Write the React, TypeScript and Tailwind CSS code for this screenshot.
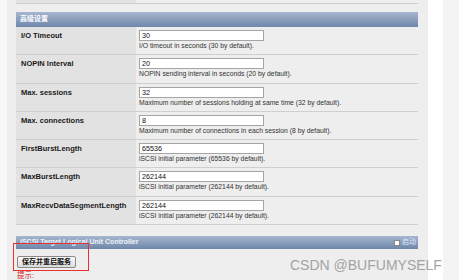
import React from "react";

const rows = [
  { label: "I/O Timeout", value: "30", desc: "I/O timeout in seconds (30 by default)." },
  { label: "NOPIN Interval", value: "20", desc: "NOPIN sending interval in seconds (20 by default)." },
  { label: "Max. sessions", value: "32", desc: "Maximum number of sessions holding at same time (32 by default)." },
  { label: "Max. connections", value: "8", desc: "Maximum number of connections in each session (8 by default)." },
  { label: "FirstBurstLength", value: "65536", desc: "iSCSI initial parameter (65536 by default)." },
  { label: "MaxBurstLength", value: "262144", desc: "iSCSI initial parameter (262144 by default)." },
  { label: "MaxRecvDataSegmentLength", value: "262144", desc: "iSCSI initial parameter (262144 by default)." },
];

export default function App() {
  return (
    <div
      className="relative flex w-[459px] h-[280px] overflow-hidden bg-[#f7f7f7]"
      style={{ fontFamily: '"Liberation Sans", "Noto Sans CJK SC", sans-serif' }}
    >
      <div className="w-[7px] shrink-0" />
      <div className="w-[421px] shrink-0 bg-[#eeeeee] pl-[9px] pr-[10px] flex flex-col">
        <div className="h-[4px] shrink-0 border-b border-[#cfcfcf] flex">
          <div className="w-[120px] bg-[#e2e2e2]" />
        </div>
        <div className="h-[8px] shrink-0" />
        <div className="h-[15px] shrink-0 bg-gradient-to-b from-[#a6b6ce] to-[#6f87aa] flex items-center pl-[4px] text-white text-[7px] font-bold">
          高级设置
        </div>
        {rows.map((r) => (
          <div key={r.label} className="h-[28.3px] shrink-0 flex border-b border-[#cfcfcf]">
            <div className="w-[120px] bg-[#e2e2e2] pl-[5px] pt-[3px] text-[7.5px] font-bold text-[#1a1a1a] leading-[11px] whitespace-nowrap">
              {r.label}
            </div>
            <div className="flex-1 pl-[3px] pt-[3px] flex flex-col">
              <div className="w-[125px] h-[11px] bg-white border border-[#a5a5a5] pl-[2px] text-[7.2px] leading-[9px] text-[#111]">
                {r.value}
              </div>
              <div className="text-[6.8px] leading-[10px] text-[#333] whitespace-nowrap">{r.desc}</div>
            </div>
          </div>
        ))}
        <div className="h-[11px] shrink-0" />
        <div className="h-[13px] shrink-0 bg-gradient-to-b from-[#a6b6ce] to-[#6f87aa] flex items-center justify-between pl-[4px] pr-[2px]">
          <span className="text-[7px] font-bold text-[#eef2f8]">iSCSI Target Logical Unit Controller</span>
          <span className="flex items-center gap-[2px]">
            <span className="w-[6px] h-[6px] bg-white border border-[#888]" />
            <span className="text-[7px] text-[#dde6ff]">启动</span>
          </span>
        </div>
        <div className="flex pl-[1px] pt-[7px] shrink-0">
          <button className="h-[12px] px-[4px] border border-[#8a8a8a] rounded-[2px] bg-gradient-to-b from-[#fafafa] to-[#dcdcdc] text-[7px] leading-[10px] font-bold text-[#111]">
            保存并重启服务
          </button>
        </div>
        <div className="pl-[1px] pt-[3px] shrink-0 text-[7.5px] text-[#d32020] leading-[10px]">提示:</div>
      </div>
      <div className="w-[15px] shrink-0 bg-white" />
      <div className="flex-1 bg-[#f4f4f4]" />
      <div className="absolute left-[13px] top-[243px] w-[76px] h-[28px] border-[1.5px] border-[#e8312f]" />
      <div
        className="absolute left-[290px] top-[256px] text-[14px] text-[#a3a3a3] leading-[18px] whitespace-nowrap"
        style={{ fontFamily: '"Liberation Sans", sans-serif' }}
      >
        CSDN @BUFUMYSELF
      </div>
    </div>
  );
}
